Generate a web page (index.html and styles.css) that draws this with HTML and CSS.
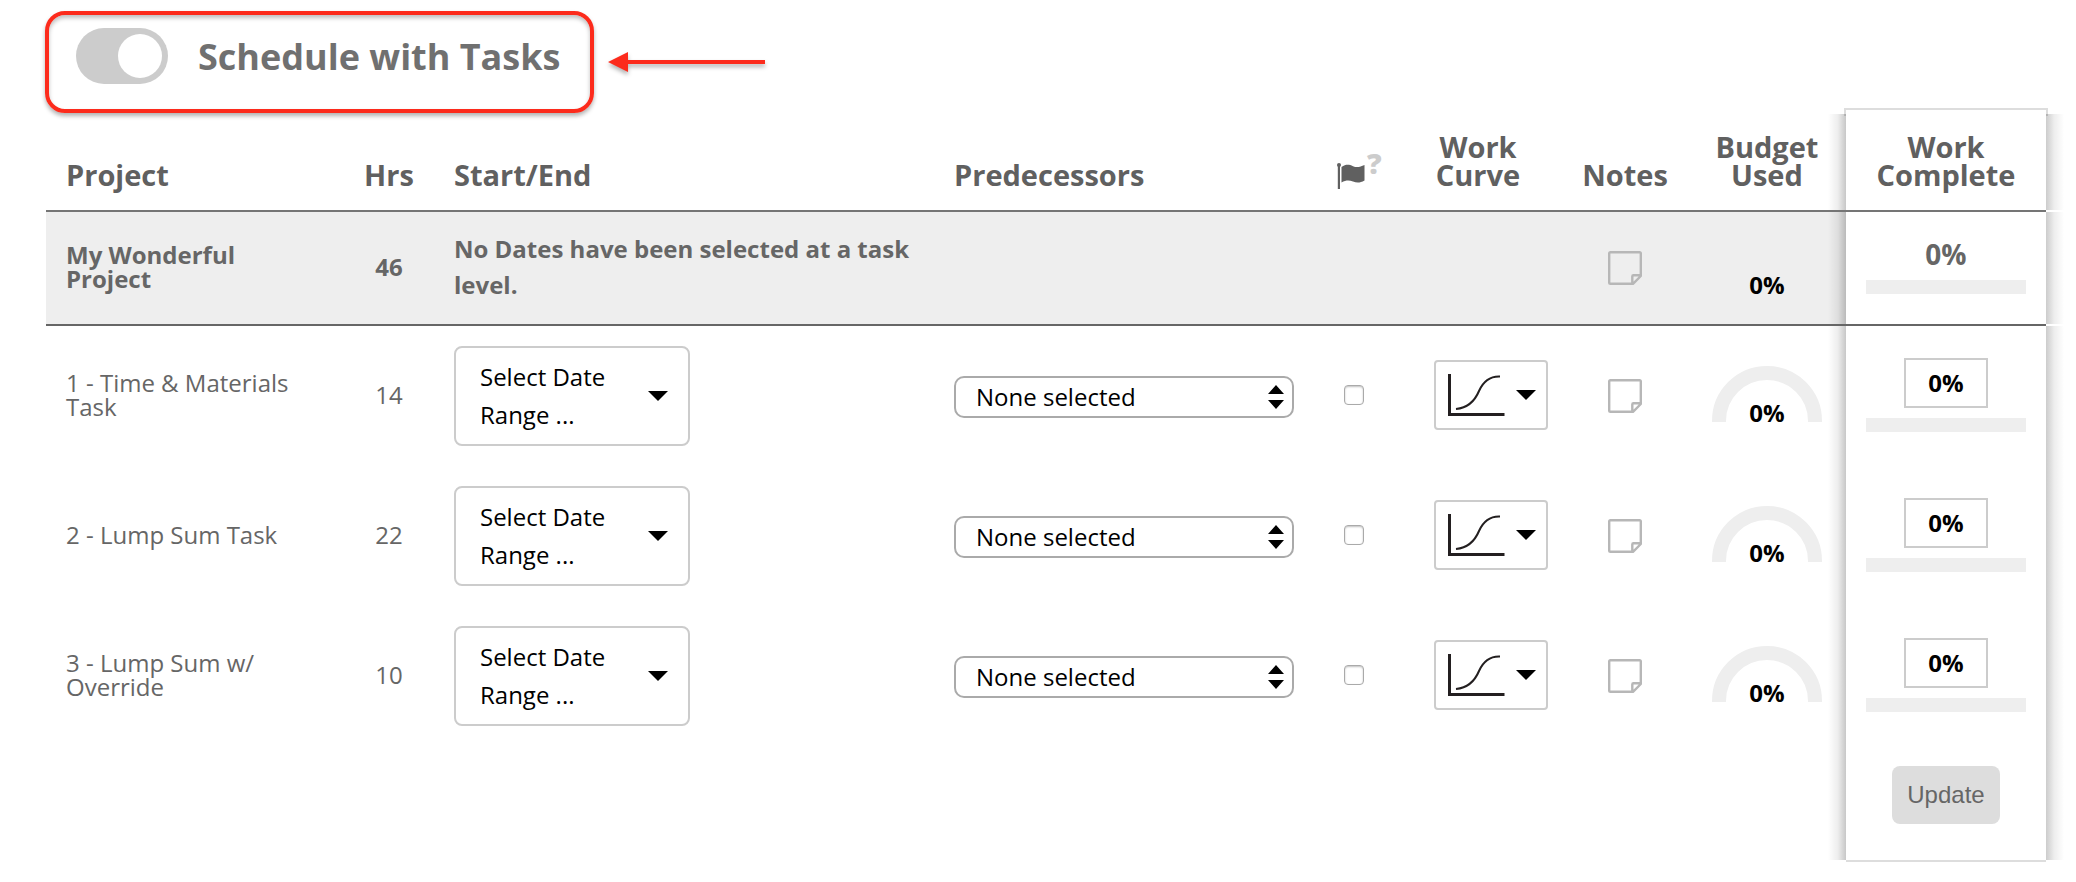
FILE: index.html
```html
<!DOCTYPE html>
<html lang="en">
<head>
<meta charset="utf-8">
<title>Schedule with Tasks</title>
<link rel="stylesheet" href="styles.css">
</head>
<body>
<svg width="0" height="0" class="sprite" aria-hidden="true">
  <symbol id="note" viewBox="0 0 34 34"><path d="M2.5 1.2H31.5Q32.8 1.2 32.8 2.5V25L25 32.8H2.500Q1.200 32.800 1.200 31.500V2.500Q1.200 1.200 2.500 1.200ZM24.300 32.500V25.500Q24.300 24.300 25.500 24.300H32.500" fill="none" stroke="#b7b7b7" stroke-width="2.400" stroke-linejoin="round"/></symbol>
  <symbol id="curve" viewBox="0 0 58 44"><path d="M2.500 1V41.500H57.500" fill="none" stroke="#231f20" stroke-width="3"/><path d="M9 36C19 35 27 30 32 18C36 9 42 3 53 3.500" fill="none" stroke="#231f20" stroke-width="2"/></symbol>
  <symbol id="caret" viewBox="0 0 20 10"><path d="M0 0H20L10 10Z"/></symbol>
  <symbol id="updown" viewBox="0 0 16 24"><path d="M0 9L8 0L16 9ZM0 15H16L8 24Z"/></symbol>
  <symbol id="arc" viewBox="0 0 110 56"><path d="M7 56V55A48 48 0 0 1 103 55V56" fill="none" stroke="#eee" stroke-width="14"/></symbol>
</svg>
<header class="top">
  <div class="callout">
    <input class="toggle" type="checkbox" role="switch" id="with-tasks" checked>
    <label class="title" for="with-tasks">Schedule with Tasks</label>
  </div>
  <svg class="arrow" width="158" height="30" viewBox="0 0 158 30" aria-hidden="true"><path d="M0 15L20 5V13H157V17H20V25Z" fill="#fc2b1c"/></svg>
</header>
<main class="schedule">
<table class="grid">
  <colgroup><col class="c-project"><col class="c-hrs"><col class="c-dates"><col class="c-pred"><col class="c-flag"><col class="c-curve"><col class="c-notes"><col class="c-budget"><col class="c-done"></colgroup>
  <thead>
    <tr>
      <th scope="col">Project</th>
      <th scope="col" class="mid">Hrs</th>
      <th scope="col">Start/End</th>
      <th scope="col">Predecessors</th>
      <th scope="col" class="flag-head"><div class="flag"><svg width="28" height="26" viewBox="0 0 28 26" role="img" aria-label="Milestone"><circle cx="2" cy="2" r="2" fill="#606060"/><path d="M.8 2H3V26H.8Z" fill="#606060"/><path d="M4.500 4C9 1 12 1.500 16 3.200S23 4 27.500 2V17.500C23 20 20 20 16 18.500S9 17 4.500 19.500Z" fill="#606060"/></svg><span class="help">?</span></div></th>
      <th scope="col" class="mid">Work Curve</th>
      <th scope="col" class="mid">Notes</th>
      <th scope="col" class="mid">Budget Used</th>
      <th scope="col" class="mid done">Work Complete</th>
    </tr>
  </thead>
  <tbody>
    <tr class="summary">
      <td>My Wonderful Project</td>
      <td class="mid">46</td>
      <td class="message">No Dates have been selected at a task level.</td>
      <td></td><td></td><td></td>
      <td class="mid level"><button class="note" type="button" aria-label="Project notes"><svg width="34" height="34"><use href="#note"/></svg></button></td>
      <td class="mid level"><div class="gauge"><span>0%</span></div></td>
      <td class="mid done"><div class="total">0%</div><div class="bar"></div></td>
    </tr>
    <tr class="task">
      <td>1 - Time &amp; Materials Task</td>
      <td class="mid">14</td>
      <td class="level"><button class="dates" type="button"><span>Select Date Range ...</span><svg width="20" height="10"><use href="#caret"/></svg></button></td>
      <td class="pick-cell"><div class="picker"><select aria-label="Predecessors of task 1"><option>None selected</option></select><svg width="16" height="24"><use href="#updown"/></svg></div></td>
      <td class="mid"><input class="check" type="checkbox" aria-label="Milestone, task 1"></td>
      <td class="curve-cell"><button class="curve" type="button" aria-label="Work curve"><svg width="58" height="44"><use href="#curve"/></svg><svg width="20" height="10"><use href="#caret"/></svg></button></td>
      <td class="mid level"><button class="note" type="button" aria-label="Task notes"><svg width="34" height="34"><use href="#note"/></svg></button></td>
      <td class="mid level"><div class="gauge"><svg width="110" height="56"><use href="#arc"/></svg><span>0%</span></div></td>
      <td class="mid done"><input class="percent" type="text" value="0%" aria-label="Work complete, task 1"><div class="bar"></div></td>
    </tr>
    <tr class="task">
      <td>2 - Lump Sum Task</td>
      <td class="mid">22</td>
      <td class="level"><button class="dates" type="button"><span>Select Date Range ...</span><svg width="20" height="10"><use href="#caret"/></svg></button></td>
      <td class="pick-cell"><div class="picker"><select aria-label="Predecessors of task 2"><option>None selected</option></select><svg width="16" height="24"><use href="#updown"/></svg></div></td>
      <td class="mid"><input class="check" type="checkbox" aria-label="Milestone, task 2"></td>
      <td class="curve-cell"><button class="curve" type="button" aria-label="Work curve"><svg width="58" height="44"><use href="#curve"/></svg><svg width="20" height="10"><use href="#caret"/></svg></button></td>
      <td class="mid level"><button class="note" type="button" aria-label="Task notes"><svg width="34" height="34"><use href="#note"/></svg></button></td>
      <td class="mid level"><div class="gauge"><svg width="110" height="56"><use href="#arc"/></svg><span>0%</span></div></td>
      <td class="mid done"><input class="percent" type="text" value="0%" aria-label="Work complete, task 2"><div class="bar"></div></td>
    </tr>
    <tr class="task">
      <td>3 - Lump Sum w/ Override</td>
      <td class="mid">10</td>
      <td class="level"><button class="dates" type="button"><span>Select Date Range ...</span><svg width="20" height="10"><use href="#caret"/></svg></button></td>
      <td class="pick-cell"><div class="picker"><select aria-label="Predecessors of task 3"><option>None selected</option></select><svg width="16" height="24"><use href="#updown"/></svg></div></td>
      <td class="mid"><input class="check" type="checkbox" aria-label="Milestone, task 3"></td>
      <td class="curve-cell"><button class="curve" type="button" aria-label="Work curve"><svg width="58" height="44"><use href="#curve"/></svg><svg width="20" height="10"><use href="#caret"/></svg></button></td>
      <td class="mid level"><button class="note" type="button" aria-label="Task notes"><svg width="34" height="34"><use href="#note"/></svg></button></td>
      <td class="mid level"><div class="gauge"><svg width="110" height="56"><use href="#arc"/></svg><span>0%</span></div></td>
      <td class="mid done"><input class="percent" type="text" value="0%" aria-label="Work complete, task 3"><div class="bar"></div></td>
    </tr>
  </tbody>
  <tfoot>
    <tr>
      <td colspan="8"></td>
      <td class="mid done"><button class="update" type="button">Update</button></td>
    </tr>
  </tfoot>
</table>
</main>
</body>
</html>
```
FILE: styles.css
```css
* { box-sizing: border-box; }
body {
  margin: 0;
  background: #fff;
  color: #666;
  font: 24px/24px "Open Sans", "Noto Sans", sans-serif;
}
button, input, select { font: inherit; color: #000; margin: 0; }
svg { display: block; flex: none; }
.sprite { position: absolute; }

/* Heading with the highlighted switch */
.top {
  display: flex;
  align-items: center;
  gap: 14px;
  padding: 11px 45px 0;
}
.callout {
  display: flex;
  align-items: center;
  gap: 30px;
  height: 102px;
  padding: 0 30px 12px 27px;
  border: 4px solid #fc2b1c;
  border-radius: 20px;
  box-shadow: 0 3px 4px rgba(0, 0, 0, .3), inset 0 3px 4px rgba(0, 0, 0, .25);
}
.toggle {
  appearance: none;
  display: flex;
  justify-content: flex-end;
  width: 92px;
  height: 56px;
  padding: 6px;
  border-radius: 28px;
  background: #ccc;
}
.toggle::before {
  content: "";
  width: 44px;
  height: 44px;
  border-radius: 50%;
  background: #fff;
}
.title { padding-top: 2px; font-size: 36px; line-height: 44px; font-weight: 700; color: #707070; }
.arrow { filter: drop-shadow(0 3px 2px rgba(0, 0, 0, .3)); }

/* Table */
.schedule { margin: -5px 30px 0 46px; }
.grid {
  width: 100%;
  table-layout: fixed;
  border-collapse: separate;
  border-spacing: 0;
}
.c-project { width: 14.9%; }
.c-hrs { width: 4.5%; }
.c-dates { width: 25%; }
.c-pred { width: 19%; }
.c-flag { width: 4%; }
.c-curve { width: 8.4%; }
.c-notes { width: 6.3%; }
.c-budget { width: 7.9%; }
.c-done { width: 10%; }

th, td { padding: 0 20px 2px; text-align: left; vertical-align: middle; }
th {
  height: 104px;
  padding-bottom: 21px;
  vertical-align: bottom;
  font-size: 29px;
  line-height: 28px;
  color: #606060;
  border-bottom: 2px solid #757575;
}
.mid { text-align: center; padding: 0 0 2px; }
th.mid { padding: 0 10px 21px; }
td:first-child { padding-right: 50px; }
.level { padding-bottom: 0; }
.pick-cell { padding: 2px 20px 0; }

.flag-head { padding: 0 0 21px 23px; }
.flag { display: flex; align-items: flex-end; gap: 2px; }
.help { color: #ccc; font-weight: 800; line-height: 24px; padding-bottom: 14px; }

.summary td {
  height: 114px;
  background: #eee;
  font-weight: 700;
  border-bottom: 2px solid #666;
}
.summary .message { line-height: 36px; }
.task td { height: 140px; }
tfoot td { height: 116px; }

/* Raised last column */
.grid .done { position: relative; background: #fff; }
.done::after {
  content: "";
  position: absolute;
  inset: 0 -18px;
  pointer-events: none;
  background:
    linear-gradient(to left, rgba(0, 0, 0, .22), rgba(0, 0, 0, .07) 45%, transparent) left / 18px 100% no-repeat,
    linear-gradient(to right, rgba(0, 0, 0, .2), rgba(0, 0, 0, .07) 45%, transparent) right / 18px 100% no-repeat;
}
th.done::after { top: 6px; }
th.done::before {
  content: "";
  position: absolute;
  inset: 0 -2px auto;
  height: 6px;
  border: 2px solid #ddd;
  border-bottom: 0;
}
tfoot .done { border-bottom: 2px solid #ddd; }

/* Controls */
.dates {
  display: flex;
  align-items: center;
  justify-content: space-between;
  width: 236px;
  height: 100px;
  padding: 0 20px 0 24px;
  border: 2px solid #ccc;
  border-radius: 8px;
  background: #fff;
  line-height: 38px;
  text-align: left;
}
.dates span { width: 140px; }
.picker { position: relative; }
.picker select {
  appearance: none;
  display: block;
  width: 100%;
  height: 42px;
  padding: 0 40px 0 20px;
  border: 2px solid #aaa;
  border-radius: 10px;
  background: #fff;
}
.picker svg { position: absolute; right: 10px; top: 9px; pointer-events: none; }
.check {
  appearance: none;
  display: block;
  width: 20px;
  height: 20px;
  margin: 0 auto;
  border: 1px solid #aaa;
  border-radius: 4px;
  background: #fff;
  box-shadow: inset 0 1px 2px rgba(0, 0, 0, .25);
}
.curve-cell { padding: 0 0 2px 40px; }
.curve {
  display: flex;
  align-items: center;
  gap: 11px;
  width: 114px;
  height: 70px;
  padding: 0 9px 0 11px;
  border: 2px solid #ccc;
  border-radius: 4px;
  background: #fff;
}
.note { display: inline-block; padding: 0; border: 0; background: none; vertical-align: middle; }
.gauge {
  display: grid;
  height: 60px;
  padding-bottom: 4px;
  place-items: end center;
}
.gauge > * { grid-area: 1 / 1; }
.gauge span { color: #000; font-weight: 700; line-height: 18px; }
.total { margin-bottom: 12px; font-size: 28px; line-height: 28px; }
.percent {
  display: block;
  width: 84px;
  height: 50px;
  margin: 0 auto 10px;
  padding: 0 0 2px;
  border: 2px solid #ccc;
  border-radius: 0;
  background: #fff;
  text-align: center;
  font-weight: 700;
}
.bar { height: 14px; margin: 0 20px; background: #eee; }
.update {
  width: 108px;
  height: 58px;
  margin-bottom: 14px;
  padding: 0;
  border: 0;
  border-radius: 8px;
  background: #ddd;
  color: #666;
  font-family: "Liberation Sans", Arial, sans-serif;
}
```
